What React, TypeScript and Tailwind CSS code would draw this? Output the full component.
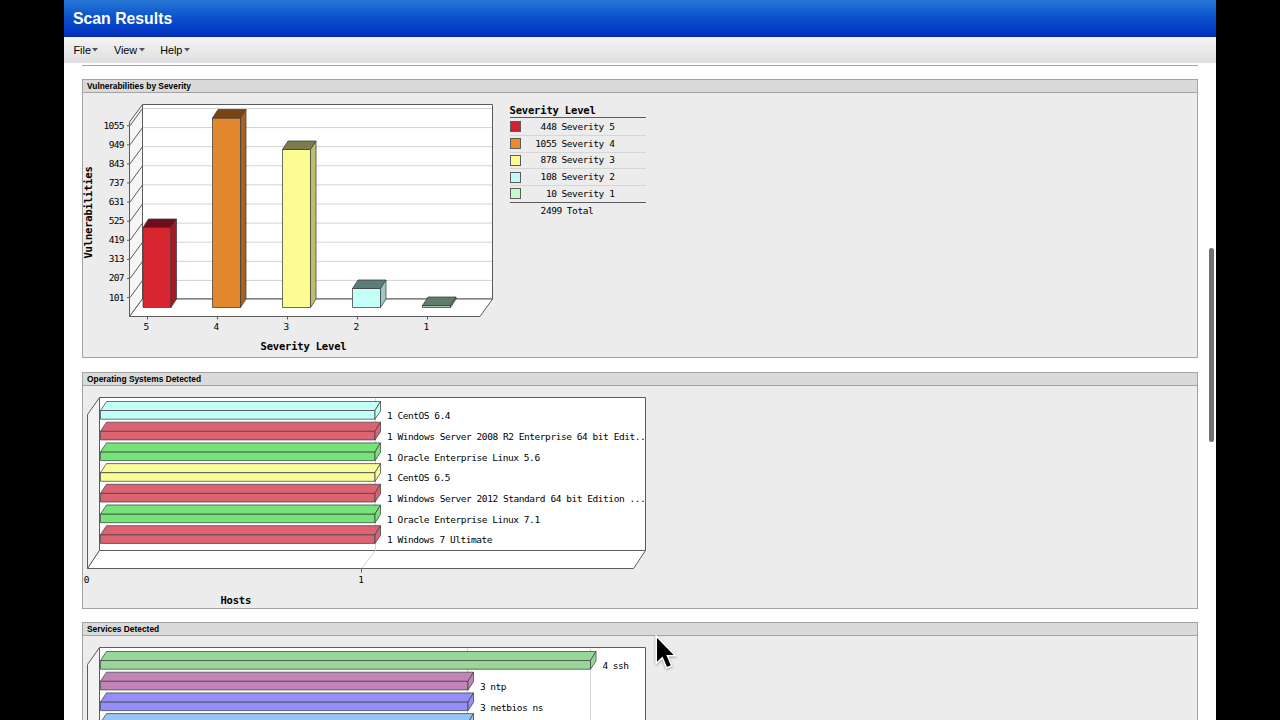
import React from "react";

type Align = "start" | "middle" | "end";

interface ChartTextProps {
  x: number;
  y: number;
  children: string;
  anchor?: Align;
  bold?: boolean;
  rotate?: boolean;
}

interface HostBar {
  label: string;
  count: number;
  color: string;
}

const LINE = "#5c5c5c";
const GRID = "#d2d2d2";

const severities = [
  { level: 5, count: 448, front: "#d7262f", top: "#6e0e1c", side: "#a81826", swatch: "#d2202c" },
  { level: 4, count: 1055, front: "#e4882e", top: "#7a4313", side: "#a9621f", swatch: "#ea8a2d" },
  { level: 3, count: 878, front: "#fbfd92", top: "#7b7b4b", side: "#bdbf6c", swatch: "#fbfb94" },
  { level: 2, count: 108, front: "#c5fffa", top: "#5d7b7a", side: "#9cc9c8", swatch: "#c3fbfb" },
  { level: 1, count: 10, front: "#a5c9b0", top: "#5f7d66", side: "#7c9c84", swatch: "#c5fbcb" },
];

const barX = [143, 212.5, 282.5, 352.5, 422.5];
const barY = [227.5, 118, 149.5, 288.5, 305.5];
const tickLabels = [1055, 949, 843, 737, 631, 525, 419, 313, 207, 101];

const operatingSystems: HostBar[] = [
  { label: "CentOS 6.4", count: 1, color: "#c3fff8" },
  { label: "Windows Server 2008 R2 Enterprise 64 bit Edit..", count: 1, color: "#dd6373" },
  { label: "Oracle Enterprise Linux 5.6", count: 1, color: "#77e277" },
  { label: "CentOS 6.5", count: 1, color: "#f9fc97" },
  { label: "Windows Server 2012 Standard 64 bit Edition ...", count: 1, color: "#dd6373" },
  { label: "Oracle Enterprise Linux 7.1", count: 1, color: "#77e277" },
  { label: "Windows 7 Ultimate", count: 1, color: "#dd6373" },
];

const services: HostBar[] = [
  { label: "ssh", count: 4, color: "#99d799" },
  { label: "ntp", count: 3, color: "#c284b7" },
  { label: "netbios ns", count: 3, color: "#968ef8" },
  { label: "", count: 3, color: "#96c4f8" },
];

// Text with the fixed advance of the chart font
function ChartText({ x, y, children, anchor = "start", bold, rotate }: ChartTextProps) {
  const advance = bold ? 6.15 : 5.28;

  return (
    <text
      x={x}
      y={y}
      textAnchor={anchor}
      textLength={children.length * advance}
      transform={rotate ? `rotate(-90 ${x} ${y})` : undefined}
      className={
        bold
          ? "fill-black font-['DejaVu_Sans_Mono',monospace] text-[10.5px] font-bold"
          : "fill-black font-['DejaVu_Sans_Mono',monospace] text-[9.5px]"
      }
    >
      {children}
    </text>
  );
}

function SeverityChart() {
  return (
    <svg width="420" height="264" viewBox="83 93 420 264" className="shrink-0">
      <g stroke={LINE} strokeWidth="1" strokeLinejoin="round">
        <path d="M129.5 316.5V122L142.5 104.5V299Z" fill="#f6f6f6" />
        <path d="M142.5 104.5H492.5V299H142.5Z" fill="#fff" />
        <path d="M142.5 299H492.5L480 316.5H129.5Z" fill="#fff" />
      </g>
      {tickLabels.map((label, i) => {
        const y = 125.7 + i * 19.1;
        return (
          <g key={label}>
            <path d={`M143 ${y - 17.2}H492`} stroke={GRID} />
            <path d={`M127 ${y}H130L142.5 ${y - 17.2}`} stroke={LINE} fill="none" />
            <ChartText x={124.5} y={y + 2.9} anchor="end">
              {String(label)}
            </ChartText>
          </g>
        );
      })}
      {severities.map((item, i) => {
        const x = barX[i];
        const y = barY[i];
        return (
          <g key={item.level} stroke="#3c3c3c" strokeOpacity="0.75" strokeLinejoin="round">
            <path d={`M${x} ${y}h28v${307.5 - y}h-28Z`} fill={item.front} />
            <path d={`M${x} ${y}l5.5 -8.5h28l-5.5 8.5Z`} fill={item.top} />
            <path d={`M${x + 28} ${y}l5.5 -8.5V299L${x + 28} 307.5Z`} fill={item.side} />
          </g>
        );
      })}
      {severities.map((item, i) => (
        <g key={item.level}>
          <path d={`M${147.5 + i * 70} 317v2.5`} stroke={LINE} />
          <ChartText x={146.3 + i * 70} y={329.5} anchor="middle">
            {String(item.level)}
          </ChartText>
        </g>
      ))}
      <ChartText x={260.5} y={349.5} bold>
        Severity Level
      </ChartText>
      <ChartText x={92} y={258.5} bold rotate>
        Vulnerabilities
      </ChartText>
    </svg>
  );
}

function SeverityLegend() {
  return (
    <div className="ml-[6.5px] mt-[12px] w-[136px] font-['DejaVu_Sans_Mono',monospace] text-[9.5px] tracking-[-0.42px] text-black">
      <div className="mb-px h-[13px] border-b border-[#5c5c5c] text-[10.5px] font-bold leading-[11px] tracking-[-0.17px]">
        Severity Level
      </div>
      {severities.map((item) => (
        <div
          key={item.level}
          className="flex h-[16.75px] items-center border-b border-[#d6d6d6] nth-[6]:border-[#5c5c5c]"
        >
          <span
            className="size-[11px] border border-[#5c5c5c]"
            style={{ backgroundColor: item.swatch }}
          />
          <span className="w-[36px] text-right">{item.count}</span>
          <span className="ml-[5px]">Severity {item.level}</span>
        </div>
      ))}
      <div className="flex h-[16px] items-center">
        <span className="w-[52.3px] text-right">2499</span>
        <span className="ml-[5px]">Total</span>
      </div>
    </div>
  );
}

interface HostChartProps {
  items: HostBar[];
  top: number;
  widths: number[];
  axis?: boolean;
}

function HostChart({ items, top, widths, axis }: HostChartProps) {
  const base = top + 153;

  return (
    <svg
      width="570"
      height="222"
      viewBox={`83 ${top - 11.5} 570 222`}
      className="shrink-0"
    >
      <g stroke={LINE} strokeLinejoin="round">
        <path d={`M87.5 ${base + 18}V${top + 17}L99.5 ${top}V${base}Z`} fill="#f3f3f4" />
        <path d={`M99.5 ${top}H645.5V${base}H99.5Z`} fill="#fff" />
        <path d={`M99.5 ${base}H645.5L633.5 ${base + 18}H87.5Z`} fill="#fff" />
      </g>
      {axis ? (
        <path d={`M375.5 ${top + 1}V${base}L361.5 ${base + 18}`} stroke={GRID} fill="none" />
      ) : (
        <path d={`M467.5 ${top + 1}V${base}M590.5 ${top + 1}V${base}`} stroke={GRID} />
      )}
      {items.map((item, i) => {
        const y = top + 4 + i * 20.7;
        const right = 100.5 + widths[i];
        return (
          <g key={i}>
            <g fill={item.color} stroke="#3c4444" strokeOpacity="0.75" strokeLinejoin="round">
              <path d={`M100.5 ${y + 9}H${right}V${y + 17.7}H100.5Z`} />
              <path d={`M100.5 ${y + 9}L106.5 ${y}H${right + 5.5}L${right} ${y + 9}Z`} />
              <path d={`M${right} ${y + 9}L${right + 5.5} ${y}V${y + 9.5}L${right} ${y + 17.7}Z`} />
            </g>
            {item.label && (
              <ChartText x={right + 12} y={y + 17.6}>
                {`${item.count} ${item.label}`}
              </ChartText>
            )}
          </g>
        );
      })}
      {axis && (
        <>
          <path d={`M361.5 ${base + 18}v4`} stroke={LINE} />
          <ChartText x={86.5} y={base + 32} anchor="middle">
            0
          </ChartText>
          <ChartText x={361} y={base + 32} anchor="middle">
            1
          </ChartText>
          <ChartText x={220.5} y={base + 53.5} bold>
            Hosts
          </ChartText>
        </>
      )}
    </svg>
  );
}

function Panel({
  title,
  className,
  children,
}: {
  title: string;
  className: string;
  children: React.ReactNode;
}) {
  return (
    <section
      className={`flex flex-col overflow-hidden border border-[#a3a3a3] bg-[#ececed] ${className}`}
    >
      <h2 className="h-[13px] shrink-0 border-b border-[#a3a3a3] bg-[#dadada] pl-[4px] text-[8.4px] font-bold leading-[12px] text-black">
        {title}
      </h2>
      <div className="flex items-start">{children}</div>
    </section>
  );
}

function MenuItem({ label }: { label: string }) {
  return (
    <button className="flex items-center gap-[1.5px] text-[10.8px] leading-none text-black">
      {label}
      <svg width="6" height="4" viewBox="0 0 6 4">
        <path d="M0 0H6L3 3.5Z" fill="#555" />
      </svg>
    </button>
  );
}

function Cursor() {
  return (
    <svg
      width="30"
      height="42"
      viewBox="0 0 30 42"
      className="absolute left-[589px] top-[632px] drop-shadow-[0_1px_1px_rgba(0,0,0,0.35)]"
    >
      <path
        d="M3.2 4V31.5L9.3 25.8L13.6 36L18.8 33.8L14.5 23.8H22.5Z"
        fill="#000"
        stroke="#fff"
        strokeWidth="1.6"
      />
    </svg>
  );
}

export default function App() {
  return (
    <div className="flex h-screen justify-center overflow-hidden bg-black font-['Liberation_Sans',Arial,sans-serif]">
      <div className="relative flex w-[1152px] flex-col overflow-hidden bg-white">
        <header className="flex h-[37px] shrink-0 items-center border-b border-[#0a2a9c] bg-linear-to-b from-[#2878d6] via-[#0d4fca] to-[#0430c0] pl-[9px] pt-[2px]">
          <h1 className="text-[15.8px] font-bold leading-none text-white">Scan Results</h1>
        </header>

        <nav className="flex h-[26px] shrink-0 items-center gap-[15.5px] bg-linear-to-b from-[#f5f5f6] to-[#dedee0] pl-[9.5px]">
          <MenuItem label="File" />
          <MenuItem label="View" />
          <MenuItem label="Help" />
        </nav>

        <main className="flex flex-col pl-[18px] pr-[18px]">
          <div className="mb-[13px] mt-[2px] h-px shrink-0 bg-[#a3a3a3]" />

          <Panel title="Vulnerabilities by Severity" className="h-[279px] shrink-0">
            <SeverityChart />
            <SeverityLegend />
          </Panel>

          <Panel title="Operating Systems Detected" className="mt-[14px] h-[237px] shrink-0">
            <HostChart items={operatingSystems} top={397.5} widths={Array(7).fill(274.5)} axis />
          </Panel>

          <Panel title="Services Detected" className="mt-[13px] h-[237px] shrink-0">
            <HostChart items={services} top={647.5} widths={[490, 367.5, 367.5, 367.5]} />
          </Panel>
        </main>

        {/* scrollbar thumb */}
        <div className="absolute right-[2px] top-[248px] h-[194px] w-[5px] rounded-full bg-[#707070]" />
        <Cursor />
      </div>
    </div>
  );
}
